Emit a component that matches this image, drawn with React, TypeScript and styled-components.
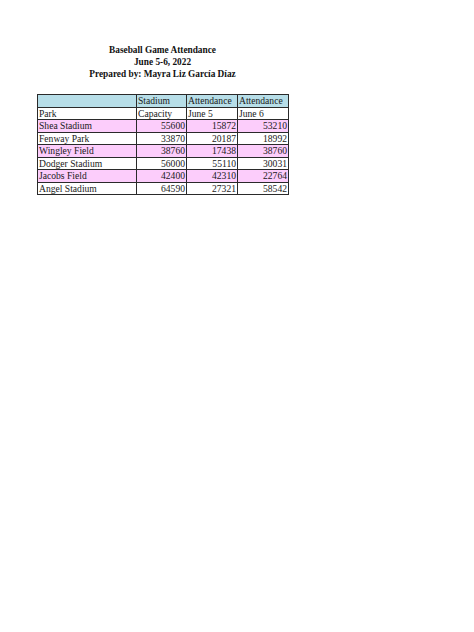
import React from "react";
import styled, { createGlobalStyle } from "styled-components";

const GlobalStyle = createGlobalStyle`
  html, body {
    margin: 0;
    padding: 0;
    background: #ffffff;
  }
`;

const Page = styled.div`
  width: 474px;
  height: 632px;
  background: #ffffff;
  padding: 43px 0 0 37px;
  box-sizing: border-box;
  font-family: "Liberation Serif", "Times New Roman", serif;
  color: #000;
`;

const Sheet = styled.div`
  width: 251px;
`;

const Heading = styled.div`
  text-align: center;
  font-weight: 700;
  font-size: 9.3px;
  line-height: 12px;
  margin-bottom: 14px;
  padding-top: 1px;
  color: #111;
`;

const Grid = styled.table`
  border-collapse: collapse;
  table-layout: fixed;
  width: 251px;
  font-size: 9.6px;
`;

const Row = styled.tr<{ $tone?: "head" | "pink" }>`
  height: 12.5px;
  background: ${(p) =>
    p.$tone === "head" ? "#b7dee8" : p.$tone === "pink" ? "#fccdfb" : "#ffffff"};
`;

const Cell = styled.td<{ $num?: boolean }>`
  border: 1px solid #2a2a2a;
  padding: 1px 1px 0;
  line-height: 10.5px;
  white-space: nowrap;
  overflow: hidden;
  color: #1a1a1a;
  text-align: ${(p) => (p.$num ? "right" : "left")};
`;

const rows = [
  { park: "Shea Stadium", cap: 55600, d5: 15872, d6: 53210, pink: true },
  { park: "Fenway Park", cap: 33870, d5: 20187, d6: 18992, pink: false },
  { park: "Wingley Field", cap: 38760, d5: 17438, d6: 38760, pink: true },
  { park: "Dodger Stadium", cap: 56000, d5: 55110, d6: 30031, pink: false },
  { park: "Jacobs Field", cap: 42400, d5: 42310, d6: 22764, pink: true },
  { park: "Angel Stadium", cap: 64590, d5: 27321, d6: 58542, pink: false },
];

export default function App() {
  return (
    <>
      <GlobalStyle />
      <Page>
        <Sheet>
          <Heading>
            <div>Baseball Game Attendance</div>
            <div>June 5-6, 2022</div>
            <div>Prepared by: Mayra Liz García Díaz</div>
          </Heading>
          <Grid>
            <colgroup>
              <col style={{ width: 99 }} />
              <col style={{ width: 50 }} />
              <col style={{ width: 51 }} />
              <col style={{ width: 51 }} />
            </colgroup>
            <tbody>
              <Row $tone="head">
                <Cell />
                <Cell>Stadium</Cell>
                <Cell>Attendance</Cell>
                <Cell>Attendance</Cell>
              </Row>
              <Row>
                <Cell>Park</Cell>
                <Cell>Capacity</Cell>
                <Cell>June 5</Cell>
                <Cell>June 6</Cell>
              </Row>
              {rows.map((r) => (
                <Row key={r.park} $tone={r.pink ? "pink" : undefined}>
                  <Cell>{r.park}</Cell>
                  <Cell $num>{r.cap}</Cell>
                  <Cell $num>{r.d5}</Cell>
                  <Cell $num>{r.d6}</Cell>
                </Row>
              ))}
            </tbody>
          </Grid>
        </Sheet>
      </Page>
    </>
  );
}
